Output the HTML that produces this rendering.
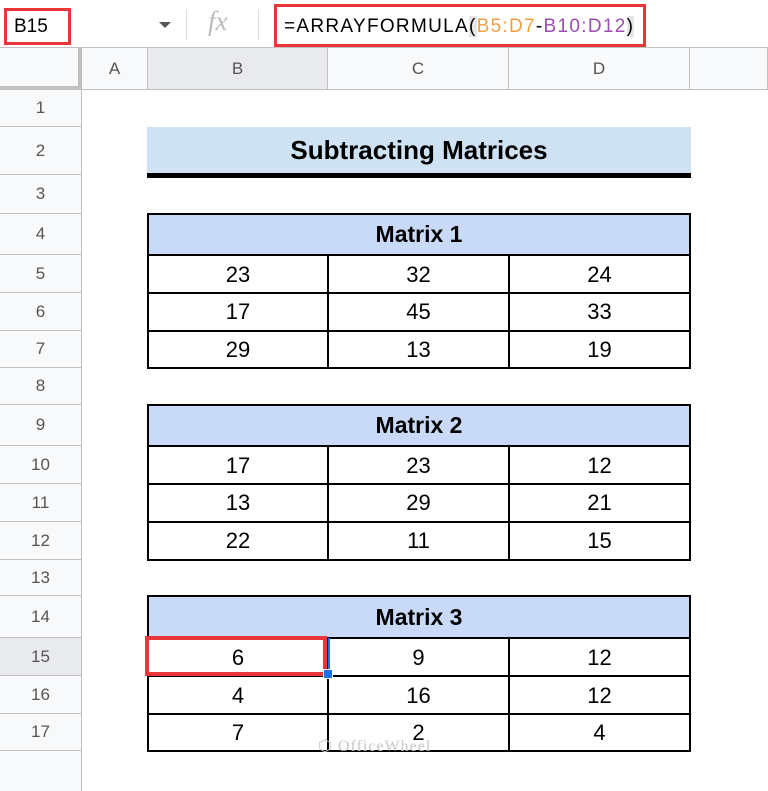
<!DOCTYPE html><html><head><style>
body{margin:0;width:768px;height:791px;background:#fff;font-family:"Liberation Sans",Arial,sans-serif;position:relative;overflow:hidden}
.a{position:absolute;box-sizing:border-box}
.rh{position:absolute;left:0;width:82px;background:#f8f9fa;border-bottom:1px solid #c0c0c0;border-right:1px solid #c0c0c0;box-sizing:border-box;color:#555;font-size:17px;display:flex;align-items:center;justify-content:center}
.ch{position:absolute;top:48px;height:42px;background:#f8f9fa;border-right:1px solid #c0c0c0;border-bottom:1px solid #c0c0c0;box-sizing:border-box;color:#555;font-size:17px;display:flex;align-items:center;justify-content:center}
.c{position:absolute;box-sizing:border-box;display:flex;align-items:center;justify-content:center;font-size:22px;color:#000}
.h{background:#c9daf8;font-weight:bold;font-size:23px}
</style></head><body>
<div class="a" style="left:0;top:0;width:768px;height:48px;background:#fff;border-bottom:1px solid #c0c0c0"></div>
<div class="a" style="left:4px;top:8px;width:67px;height:37px;border:3px solid #e8363a;font-size:19px;padding:5px 0 0 7px">B15</div>
<div class="a" style="left:159px;top:22px;width:0;height:0;border-left:6px solid transparent;border-right:6px solid transparent;border-top:6px solid #555"></div>
<div class="a" style="left:186px;top:10px;width:1px;height:30px;background:#ddd"></div>
<div class="a" style="left:208px;top:6px;font-family:'Liberation Serif',serif;font-style:italic;font-size:27px;color:#bbb">fx</div>
<div class="a" style="left:258px;top:10px;width:1px;height:30px;background:#ddd"></div>
<div class="a" style="left:274px;top:4px;width:372px;height:43px;border:3px solid #e8363a;font-size:19px;padding:9px 0 0 7px;white-space:nowrap;letter-spacing:1.3px">=ARRAYFORMULA<span style="background:#e6e6e6">(</span><span style="color:#f0a040">B5:D7</span>-<span style="color:#9b4db0">B10:D12</span><span style="background:#e6e6e6">)</span></div>
<div class="a" style="left:0;top:48px;width:82px;height:42px;background:#f8f9fa;border-right:4px solid #c0c0c0;border-bottom:4px solid #c0c0c0"></div>
<div class="ch" style="left:82px;width:66px">A</div>
<div class="ch" style="left:148px;width:180px;background:#e8eaed">B</div>
<div class="ch" style="left:328px;width:181px">C</div>
<div class="ch" style="left:509px;width:181px">D</div>
<div class="ch" style="left:690px;width:78px"></div>
<div class="rh" style="top:90px;height:37px">1</div>
<div class="rh" style="top:127px;height:48px">2</div>
<div class="rh" style="top:175px;height:39px">3</div>
<div class="rh" style="top:214px;height:41px">4</div>
<div class="rh" style="top:255px;height:38px">5</div>
<div class="rh" style="top:293px;height:38px">6</div>
<div class="rh" style="top:331px;height:37px">7</div>
<div class="rh" style="top:368px;height:37px">8</div>
<div class="rh" style="top:405px;height:41px">9</div>
<div class="rh" style="top:446px;height:38px">10</div>
<div class="rh" style="top:484px;height:38px">11</div>
<div class="rh" style="top:522px;height:38px">12</div>
<div class="rh" style="top:560px;height:36px">13</div>
<div class="rh" style="top:596px;height:42px">14</div>
<div class="rh" style="top:638px;height:38px;background:#e8eaed">15</div>
<div class="rh" style="top:676px;height:38px">16</div>
<div class="rh" style="top:714px;height:37px">17</div>
<div class="rh" style="top:751px;height:40px;border-bottom:none"></div>
<div class="c" style="left:147px;top:127px;width:544px;height:46px;background:#cfe2f3;font-weight:bold;font-size:26px">Subtracting Matrices</div>
<div class="a" style="left:147px;top:173px;width:544px;height:5px;background:#000"></div>

<div class="c h" style="left:147px;top:213px;width:544px;height:43px;border:2px solid #000">Matrix 1</div>
<div class="a" style="left:147px;top:254px;width:544px;height:115px;border:2px solid #000;border-top:none"></div>
<div class="a" style="left:327px;top:254px;width:2px;height:114px;background:#000"></div>
<div class="a" style="left:508px;top:254px;width:2px;height:114px;background:#000"></div>
<div class="a" style="left:147px;top:292px;width:544px;height:2px;background:#000"></div>
<div class="a" style="left:147px;top:330px;width:544px;height:2px;background:#000"></div>
<div class="c" style="left:148px;top:256px;width:180px;height:37px">23</div><div class="c" style="left:328px;top:256px;width:181px;height:37px">32</div><div class="c" style="left:509px;top:256px;width:181px;height:37px">24</div>
<div class="c" style="left:148px;top:293px;width:180px;height:38px">17</div><div class="c" style="left:328px;top:293px;width:181px;height:38px">45</div><div class="c" style="left:509px;top:293px;width:181px;height:38px">33</div>
<div class="c" style="left:148px;top:331px;width:180px;height:37px">29</div><div class="c" style="left:328px;top:331px;width:181px;height:37px">13</div><div class="c" style="left:509px;top:331px;width:181px;height:37px">19</div>

<div class="c h" style="left:147px;top:404px;width:544px;height:43px;border:2px solid #000">Matrix 2</div>
<div class="a" style="left:147px;top:445px;width:544px;height:116px;border:2px solid #000;border-top:none"></div>
<div class="a" style="left:327px;top:445px;width:2px;height:115px;background:#000"></div>
<div class="a" style="left:508px;top:445px;width:2px;height:115px;background:#000"></div>
<div class="a" style="left:147px;top:483px;width:544px;height:2px;background:#000"></div>
<div class="a" style="left:147px;top:521px;width:544px;height:2px;background:#000"></div>
<div class="c" style="left:148px;top:447px;width:180px;height:37px">17</div><div class="c" style="left:328px;top:447px;width:181px;height:37px">23</div><div class="c" style="left:509px;top:447px;width:181px;height:37px">12</div>
<div class="c" style="left:148px;top:484px;width:180px;height:38px">13</div><div class="c" style="left:328px;top:484px;width:181px;height:38px">29</div><div class="c" style="left:509px;top:484px;width:181px;height:38px">21</div>
<div class="c" style="left:148px;top:522px;width:180px;height:38px">22</div><div class="c" style="left:328px;top:522px;width:181px;height:38px">11</div><div class="c" style="left:509px;top:522px;width:181px;height:38px">15</div>

<div class="c h" style="left:147px;top:595px;width:544px;height:44px;border:2px solid #000">Matrix 3</div>
<div class="a" style="left:147px;top:637px;width:544px;height:115px;border:2px solid #000;border-top:none"></div>
<div class="a" style="left:327px;top:637px;width:2px;height:114px;background:#000"></div>
<div class="a" style="left:508px;top:637px;width:2px;height:114px;background:#000"></div>
<div class="a" style="left:147px;top:675px;width:544px;height:2px;background:#000"></div>
<div class="a" style="left:147px;top:713px;width:544px;height:2px;background:#000"></div>
<div class="c" style="left:148px;top:639px;width:180px;height:37px">6</div><div class="c" style="left:328px;top:639px;width:181px;height:37px">9</div><div class="c" style="left:509px;top:639px;width:181px;height:37px">12</div>
<div class="c" style="left:148px;top:677px;width:180px;height:37px">4</div><div class="c" style="left:328px;top:677px;width:181px;height:37px">16</div><div class="c" style="left:509px;top:677px;width:181px;height:37px">12</div>
<div class="c" style="left:148px;top:715px;width:180px;height:36px">7</div><div class="c" style="left:328px;top:715px;width:181px;height:36px">2</div><div class="c" style="left:509px;top:715px;width:181px;height:36px">4</div>
<div class="a" style="left:145px;top:636px;width:182px;height:40px;border:4px solid #e8363a"></div>
<div class="a" style="left:328px;top:638px;width:2px;height:36px;background:#1a73e8"></div>
<div class="a" style="left:323px;top:669px;width:10px;height:10px;background:#1a73e8;border:1px solid #fff"></div>
<div class="a" style="left:318px;top:736px;font-family:'Liberation Serif',serif;font-size:16px;color:#c8c8c8;letter-spacing:1px">⬡ OfficeWheel</div>
</body></html>
